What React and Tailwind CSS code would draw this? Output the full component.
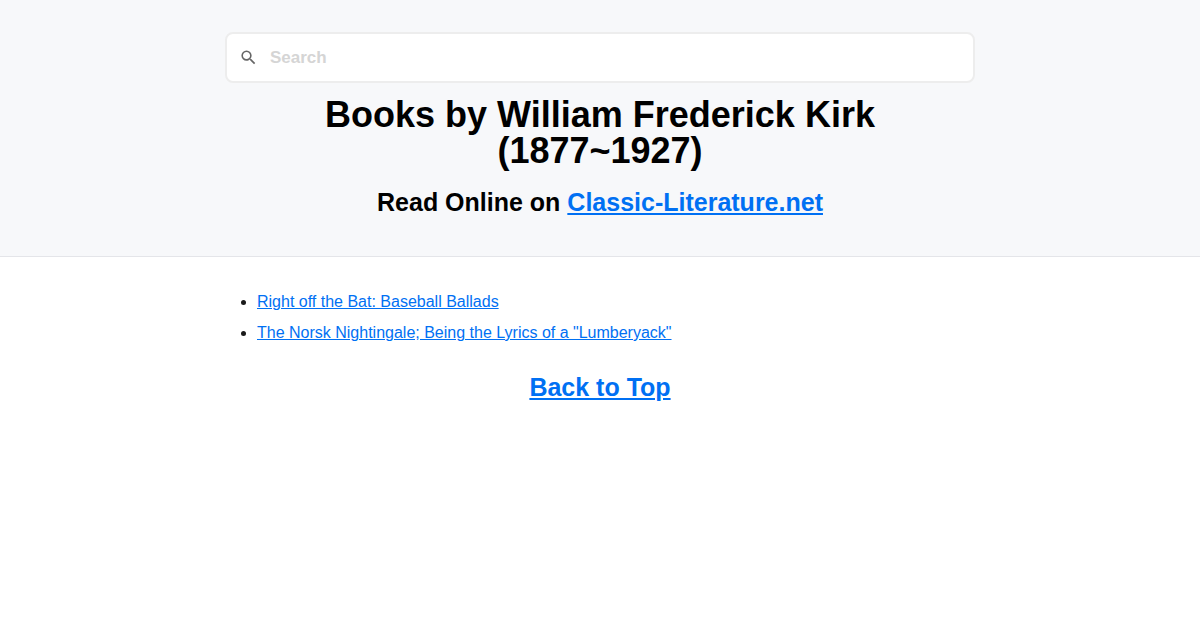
const books = [
  "Right off the Bat: Baseball Ballads",
  'The Norsk Nightingale; Being the Lyrics of a "Lumberyack"',
];

function SearchBox() {
  return (
    <label className="flex h-[51px] items-center rounded-lg border-2 border-[#ededed] bg-white pl-3">
      <svg viewBox="0 0 24 24" className="size-[19px] shrink-0 fill-[#666]" aria-hidden="true">
        <path d="M15.5 14h-.79l-.28-.27A6.471 6.471 0 0 0 16 9.5 6.5 6.5 0 1 0 9.5 16c1.61 0 3.09-.59 4.23-1.57l.27.28v.79l5 4.99L20.49 19l-4.99-5zm-6 0C7.01 14 5 11.99 5 9.5S7.01 5 9.5 5 14 7.01 14 9.5 11.99 14 9.5 14z" />
      </svg>
      <input
        type="text"
        aria-label="Search"
        placeholder="Search"
        className="h-full min-w-0 flex-1 bg-transparent px-3 text-[17px] font-bold outline-none placeholder:text-[#d5d5d5]"
      />
    </label>
  );
}

export default function App() {
  return (
    <div id="top" className="font-['Liberation_Sans',Arial,sans-serif] text-black">
      <header className="border-b border-[#e4e5e9] bg-[#f7f8fa] px-4 pt-8 pb-10">
        <div className="mx-auto max-w-[750px]">
          <SearchBox />
          <h1 className="mx-auto mt-[14px] max-w-[600px] text-center text-4xl leading-9 font-bold">
            Books by William Frederick Kirk (1877~1927)
          </h1>
          <h2 className="mt-[19px] text-center text-[25px] leading-7 font-bold">
            Read Online on{" "}
            <a href="#top" className="text-[#0070f3] underline">
              Classic-Literature.net
            </a>
          </h2>
        </div>
      </header>
      <main className="mx-auto max-w-[750px] pt-[31px]">
        <ul className="list-disc space-y-1 pl-8 text-base leading-[27px] text-[#1a1a1a]">
          {books.map((title) => (
            <li key={title}>
              <a href="#top" className="text-[#0070f3] underline">
                {title}
              </a>
            </li>
          ))}
        </ul>
        <h2 className="mt-[27px] text-center text-[25px] leading-7 font-bold">
          <a href="#top" className="text-[#0070f3] underline">
            Back to Top
          </a>
        </h2>
      </main>
    </div>
  );
}
